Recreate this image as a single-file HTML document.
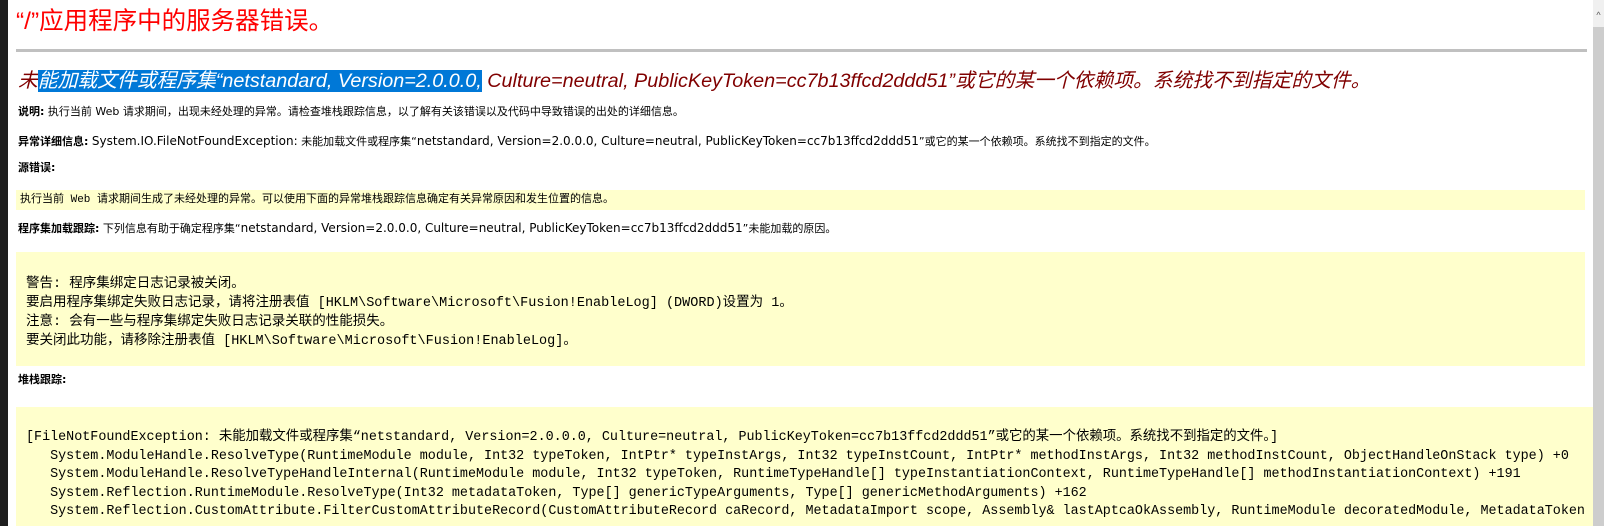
<!DOCTYPE html>
<html><head><meta charset="utf-8"><style>
html,body{margin:0;padding:0;background:#fff;width:1604px;height:526px;overflow:hidden;position:relative}
.a{position:absolute;white-space:pre;margin:0}
.sans{font-family:"DejaVu Sans","Noto Sans CJK SC",sans-serif}
.mono{font-family:"Liberation Mono","Noto Sans CJK SC",monospace}
.y{position:absolute;background:#ffffcc}
b{font-weight:bold}
.l{font-size:12px}
</style></head><body>
<div style="position:absolute;left:0;top:0;width:8px;height:526px;background:#1e1e1e"></div>
<div style="position:absolute;left:1593px;top:0;width:11px;height:526px;background:#cdcdcd"></div>
<div style="position:absolute;left:1593px;top:0;width:11px;height:27px;background:#f0f0f0;color:#555;font:9px 'Liberation Sans';text-align:center;line-height:30px">^</div>

<div class="a" style="left:16px;top:6px;font-family:'Liberation Sans','Noto Sans CJK SC',sans-serif;font-size:24.5px;line-height:32px;color:#ff0000">“/”应用程序中的服务器错误。</div>
<div style="position:absolute;left:16px;top:49px;width:1571px;height:3px;background:#c0c0c0"></div>

<div class="a" style="left:18px;top:68px;font-family:'Liberation Sans','Noto Sans CJK SC',sans-serif;font-size:19.8px;line-height:26px;font-style:italic;color:#800000">未<span style="color:#fff;background:#0078d7">能加载文件或程序集“netstandard, Version=2.0.0.0,</span> Culture=neutral, PublicKeyToken=cc7b13ffcd2ddd51”或它的某一个依赖项。系统找不到指定的文件。</div>

<div class="a sans" style="left:18px;top:105px;font-size:11px;line-height:14px"><b>说明:</b> 执行当前 Web 请求期间，出现未经处理的异常。请检查堆栈跟踪信息，以了解有关该错误以及代码中导致错误的出处的详细信息。</div>
<div class="a sans" style="left:18px;top:134px;font-size:11px;line-height:14px"><b>异常详细信息:</b> <span class="l">System.IO.FileNotFoundException:</span> 未能加载文件或程序集“<span class="l">netstandard, Version=2.0.0.0, Culture=neutral, PublicKeyToken=cc7b13ffcd2ddd51</span>”或它的某一个依赖项。系统找不到指定的文件。</div>
<div class="a sans" style="left:18px;top:161px;font-size:11px;line-height:14px"><b>源错误:</b></div>

<div class="y" style="left:16px;top:190px;width:1569px;height:20px"></div>
<div class="a mono" style="left:20px;top:192px;font-size:11px;line-height:16px">执行当前 Web 请求期间生成了未经处理的异常。可以使用下面的异常堆栈跟踪信息确定有关异常原因和发生位置的信息。</div>

<div class="a sans" style="left:18px;top:221px;font-size:11px;line-height:14px"><b>程序集加载跟踪:</b> 下列信息有助于确定程序集“<span class="l">netstandard, Version=2.0.0.0, Culture=neutral, PublicKeyToken=cc7b13ffcd2ddd51</span>”未能加载的原因。</div>

<div class="y" style="left:16px;top:252px;width:1569px;height:114px"></div>
<div class="a mono" style="left:26px;top:275px;font-size:13.5px;line-height:19px">警告: 程序集绑定日志记录被关闭。
要启用程序集绑定失败日志记录，请将注册表值 [HKLM\Software\Microsoft\Fusion!EnableLog] (DWORD)设置为 1。
注意: 会有一些与程序集绑定失败日志记录关联的性能损失。
要关闭此功能，请移除注册表值 [HKLM\Software\Microsoft\Fusion!EnableLog]。</div>

<div class="a sans" style="left:18px;top:373px;font-size:11px;line-height:14px"><b>堆栈跟踪:</b></div>

<div class="y" style="left:16px;top:407px;width:1577px;height:119px"></div>
<div class="a mono" style="left:26px;top:429px;font-size:13.4px;line-height:18.6px">[FileNotFoundException: 未能加载文件或程序集“netstandard, Version=2.0.0.0, Culture=neutral, PublicKeyToken=cc7b13ffcd2ddd51”或它的某一个依赖项。系统找不到指定的文件。]
   System.ModuleHandle.ResolveType(RuntimeModule module, Int32 typeToken, IntPtr* typeInstArgs, Int32 typeInstCount, IntPtr* methodInstArgs, Int32 methodInstCount, ObjectHandleOnStack type) +0
   System.ModuleHandle.ResolveTypeHandleInternal(RuntimeModule module, Int32 typeToken, RuntimeTypeHandle[] typeInstantiationContext, RuntimeTypeHandle[] methodInstantiationContext) +191
   System.Reflection.RuntimeModule.ResolveType(Int32 metadataToken, Type[] genericTypeArguments, Type[] genericMethodArguments) +162
   System.Reflection.CustomAttribute.FilterCustomAttributeRecord(CustomAttributeRecord caRecord, MetadataImport scope, Assembly&amp; lastAptcaOkAssembly, RuntimeModule decoratedModule, MetadataToken</div>
</body></html>
